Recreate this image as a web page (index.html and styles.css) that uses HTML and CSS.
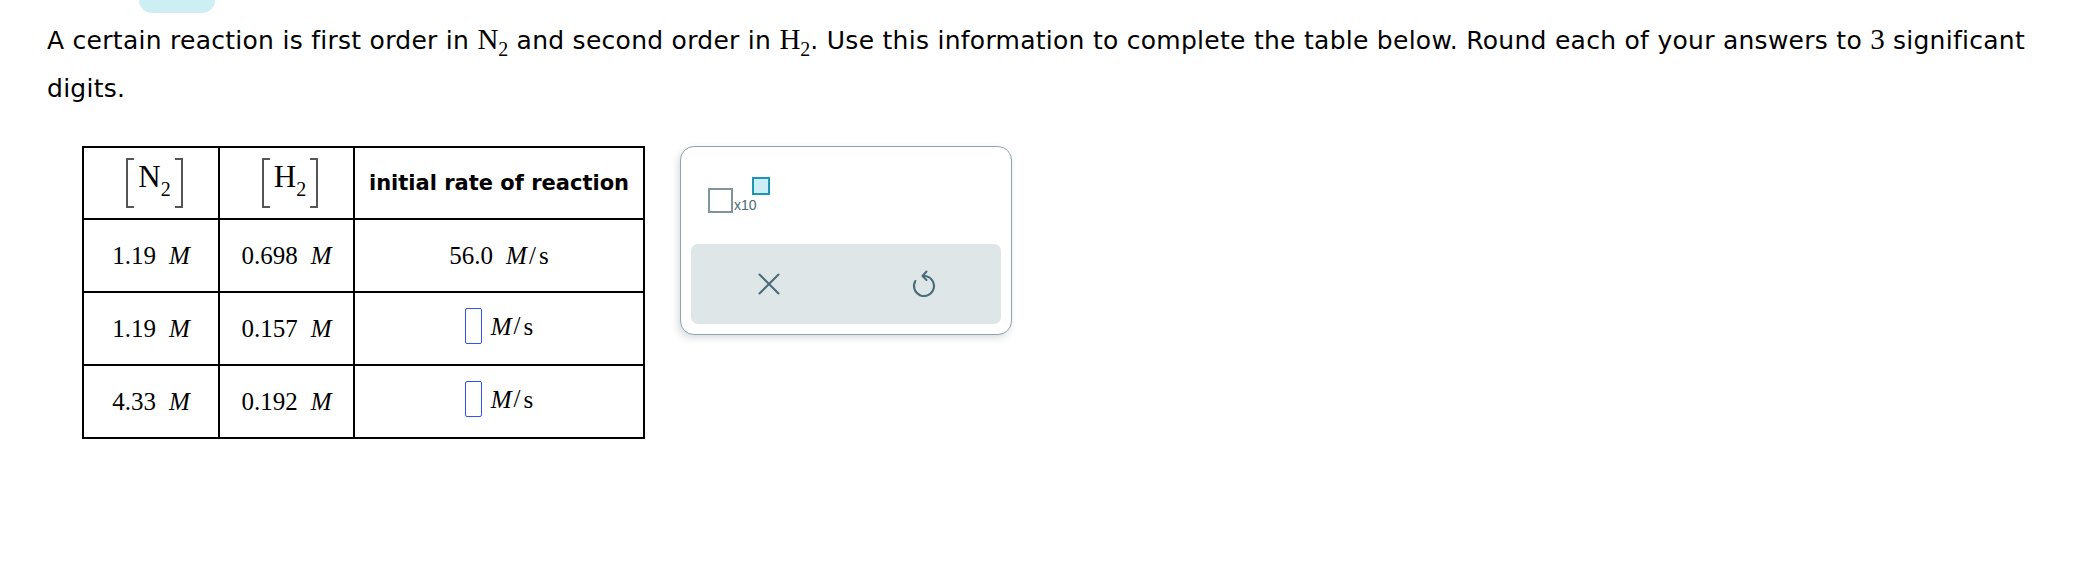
FILE: index.html
```html
<!DOCTYPE html>
<html>
<head>
<meta charset="utf-8">
<link rel="stylesheet" href="styles.css">
</head>
<body>
<div class="tab"></div>
<p class="question"><span>A certain reaction is first order in </span><span class="m">N<span class="sub">2</span></span><span> and second order in </span><span class="m">H<span class="sub">2</span></span><span>. Use this information to complete the table below. Round each of your answers to </span><span class="m">3</span><span> significant</span><br><span>digits.</span></p>
<div class="work">
  <table class="data">
    <colgroup><col class="c1"><col class="c2"><col class="c3"></colgroup>
    <tr class="head">
      <td><span class="conc"><span class="br bl"></span><span class="hm">N<span class="hsub">2</span></span><span class="br brr"></span></span></td>
      <td><span class="conc"><span class="br bl"></span><span class="hm">H<span class="hsub">2</span></span><span class="br brr"></span></span></td>
      <td class="title">initial rate of reaction</td>
    </tr>
    <tr>
      <td>1.19<i class="u">M</i></td>
      <td>0.698<i class="u">M</i></td>
      <td>56.0<i class="u">M</i><span class="sl">/</span>s</td>
    </tr>
    <tr>
      <td>1.19<i class="u">M</i></td>
      <td>0.157<i class="u">M</i></td>
      <td><span class="inp"></span><i>M</i><span class="sl">/</span>s</td>
    </tr>
    <tr>
      <td>4.33<i class="u">M</i></td>
      <td>0.192<i class="u">M</i></td>
      <td><span class="inp"></span><i>M</i><span class="sl">/</span>s</td>
    </tr>
  </table>
  <div class="panel">
    <div class="tools">
      <div class="sci">
        <span class="bigbox"></span>
        <span class="x10">x10</span>
        <span class="supbox"></span>
      </div>
    </div>
    <div class="actions">
      <button class="act" aria-label="clear">
        <svg width="24" height="24" viewBox="0 0 24 24"><path d="M2.5 2.5 L21.5 21.5 M21.5 2.5 L2.5 21.5" stroke="#4a6d7a" stroke-width="2.1" fill="none" stroke-linecap="round"/></svg>
      </button>
      <button class="act" aria-label="undo">
        <svg width="26" height="32" viewBox="0 0 26 32"><path d="M13 8 A10 10 0 1 1 4.3 13" stroke="#4a6d7a" stroke-width="2.1" fill="none" stroke-linecap="round"/><path d="M15.5 3.5 L11.5 8 L15.5 12" stroke="#4a6d7a" stroke-width="2.1" fill="none" stroke-linecap="round" stroke-linejoin="round"/></svg>
      </button>
    </div>
  </div>
</div>
</body>
</html>
```

FILE: styles.css
```css
html, body {
  margin: 0;
  padding: 0;
  background: #fff;
}
body {
  font-family: "DejaVu Sans", Verdana, sans-serif;
  font-size: 25px;
  color: #000;
  width: 2084px;
}
.tab {
  margin-left: 139px;
  width: 76px;
  height: 13px;
  background: #cdeef3;
  border-radius: 0 0 13px 13px;
}
.question {
  margin: 4px 40px 0 47px;
  line-height: 48px;
  letter-spacing: 0.27px;
}
.m {
  font-family: "Liberation Serif", "Times New Roman", serif;
  font-size: 29px;
  line-height: 1;
  letter-spacing: 0;
}
.sub {
  font-size: 20px;
  vertical-align: -7px;
  line-height: 1;
}
.work {
  display: flex;
  align-items: flex-start;
  gap: 35px;
  margin: 33px 0 0 82px;
}
.data {
  border-collapse: collapse;
  border: 2px solid #000;
  font-family: "Liberation Serif", "Times New Roman", serif;
  font-size: 25px;
}
.c1 { width: 136px; }
.c2 { width: 135px; }
.c3 { width: 290px; }
.data td {
  border: 2px solid #000;
  text-align: center;
  vertical-align: middle;
  height: 71px;
  padding: 0;
  white-space: nowrap;
}
.data tr.head td { height: 70px; }
.data td.title {
  font-family: "DejaVu Sans", Verdana, sans-serif;
  font-weight: bold;
  font-size: 21px;
}
.conc {
  display: inline-flex;
  align-items: center;
  vertical-align: middle;
  padding-left: 7px;
}
.br {
  display: inline-block;
  width: 6px;
  height: 46px;
  border: 2px solid #555;
}
.bl { border-right: none; margin-right: 4px; }
.brr { border-left: none; margin-left: 4px; }
.hm {
  font-size: 31px;
  line-height: 1;
  position: relative;
  top: -3px;
}
.hsub {
  font-size: 20px;
  vertical-align: -9px;
  line-height: 1;
}
.u { margin-left: 13px; }
.sl { margin: 0 3px 0 2px; }
.inp {
  display: inline-block;
  width: 15px;
  height: 34px;
  border: 1.6px solid #3350ff;
  border-radius: 2px;
  vertical-align: middle;
  margin-right: 9px;
  position: relative;
  top: -3px;
}
.panel {
  border: 1px solid #8ea5b0;
  border-radius: 14px;
  box-shadow: -2px 3px 7px rgba(40, 60, 70, 0.18);
  background: #fff;
  display: flex;
  flex-direction: column;
  padding: 0 10px 10px 10px;
  box-sizing: content-box;
  width: 310px;
  height: 177px;
}
.tools {
  height: 97px;
  padding-left: 17px;
  padding-top: 30px;
  box-sizing: border-box;
}
.sci {
  position: relative;
  width: 64px;
  height: 36px;
  display: flex;
  align-items: flex-end;
}
.bigbox {
  display: block;
  width: 21px;
  height: 21px;
  border: 2.5px solid #7e959f;
}
.x10 {
  font-family: "Liberation Sans", Arial, sans-serif;
  font-size: 14px;
  color: #4b6a76;
  margin-left: 1px;
  line-height: 12px;
  margin-bottom: 2px;
}
.supbox {
  position: absolute;
  left: 44px;
  top: 0;
  width: 14px;
  height: 14px;
  border: 2px solid #1b97b1;
  background: #cdeef4;
}
.actions {
  flex: 1;
  display: flex;
  background: #dfe6e8;
  border-radius: 7px;
}
.act {
  flex: 1;
  border: none;
  background: transparent;
  padding: 0;
  display: flex;
  align-items: center;
  justify-content: center;
}
```
